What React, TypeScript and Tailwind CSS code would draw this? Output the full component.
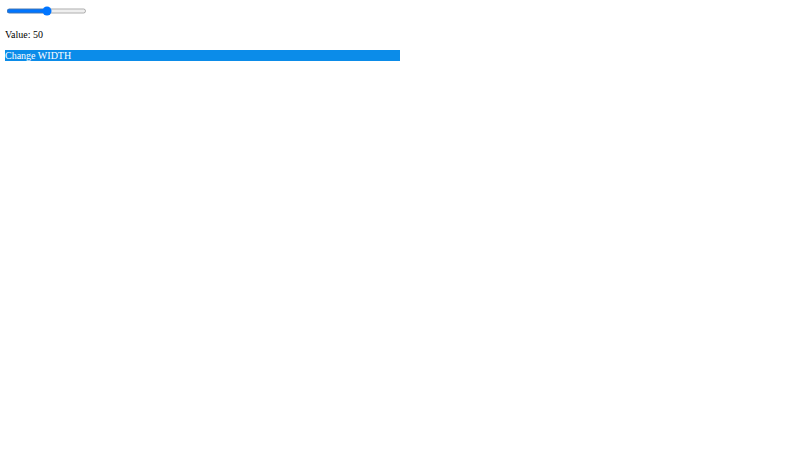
import React, { useState } from 'react';

// Range slider that drives the width of the bar below it
export default function App() {
  const [value, setValue] = useState(50);

  return (
    <div className="p-[5px] font-['Liberation_Serif',serif] text-[10px] text-black">
      <div className="flex h-[14px] items-start">
        <input
          type="range"
          min={0}
          max={100}
          value={value}
          onChange={(e) => setValue(Number(e.target.value))}
          className="m-[2px] [zoom:0.625]"
        />
      </div>
      <p className="my-[10px] leading-[11px]">Value: {value}</p>
      <div className="bg-[#0b8ce9] text-white h-[11px] leading-[11px]" style={{ width: `${value}%` }}>
        Change WIDTH
      </div>
    </div>
  );
}
